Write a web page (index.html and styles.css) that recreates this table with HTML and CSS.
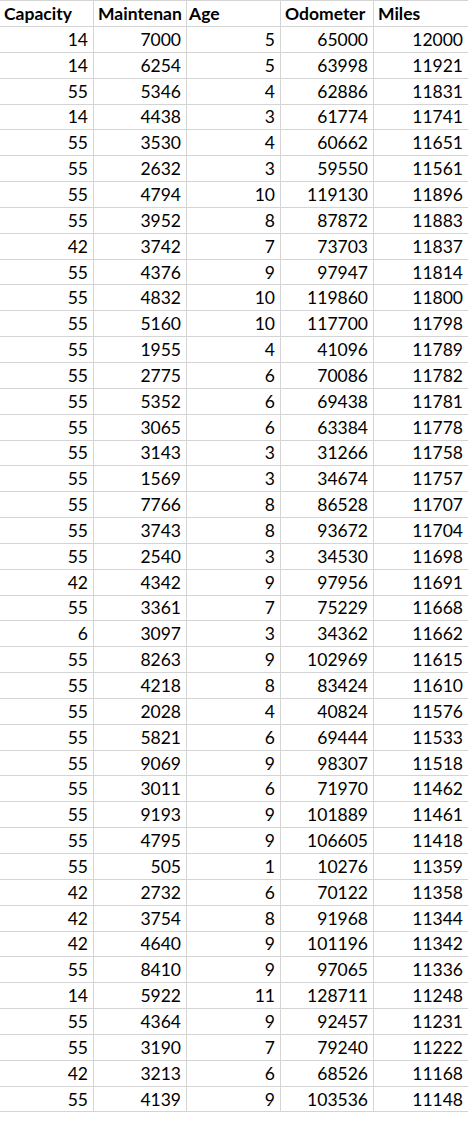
FILE: index.html
```html
<!DOCTYPE html>
<html>
<head>
<meta charset="utf-8">
<link rel="stylesheet" href="styles.css">
</head>
<body>
<div class="sheet">
  <div class="row head"><div class="c">Capacity</div><div class="c">Maintenan</div><div class="c age">Age</div><div class="c">Odometer</div><div class="c">Miles</div></div>
  <div class="row"><div class="c">14</div><div class="c">7000</div><div class="c">5</div><div class="c">65000</div><div class="c">12000</div></div>
  <div class="row"><div class="c">14</div><div class="c">6254</div><div class="c">5</div><div class="c">63998</div><div class="c">11921</div></div>
  <div class="row"><div class="c">55</div><div class="c">5346</div><div class="c">4</div><div class="c">62886</div><div class="c">11831</div></div>
  <div class="row"><div class="c">14</div><div class="c">4438</div><div class="c">3</div><div class="c">61774</div><div class="c">11741</div></div>
  <div class="row"><div class="c">55</div><div class="c">3530</div><div class="c">4</div><div class="c">60662</div><div class="c">11651</div></div>
  <div class="row"><div class="c">55</div><div class="c">2632</div><div class="c">3</div><div class="c">59550</div><div class="c">11561</div></div>
  <div class="row"><div class="c">55</div><div class="c">4794</div><div class="c">10</div><div class="c">119130</div><div class="c">11896</div></div>
  <div class="row"><div class="c">55</div><div class="c">3952</div><div class="c">8</div><div class="c">87872</div><div class="c">11883</div></div>
  <div class="row"><div class="c">42</div><div class="c">3742</div><div class="c">7</div><div class="c">73703</div><div class="c">11837</div></div>
  <div class="row"><div class="c">55</div><div class="c">4376</div><div class="c">9</div><div class="c">97947</div><div class="c">11814</div></div>
  <div class="row"><div class="c">55</div><div class="c">4832</div><div class="c">10</div><div class="c">119860</div><div class="c">11800</div></div>
  <div class="row"><div class="c">55</div><div class="c">5160</div><div class="c">10</div><div class="c">117700</div><div class="c">11798</div></div>
  <div class="row"><div class="c">55</div><div class="c">1955</div><div class="c">4</div><div class="c">41096</div><div class="c">11789</div></div>
  <div class="row"><div class="c">55</div><div class="c">2775</div><div class="c">6</div><div class="c">70086</div><div class="c">11782</div></div>
  <div class="row"><div class="c">55</div><div class="c">5352</div><div class="c">6</div><div class="c">69438</div><div class="c">11781</div></div>
  <div class="row"><div class="c">55</div><div class="c">3065</div><div class="c">6</div><div class="c">63384</div><div class="c">11778</div></div>
  <div class="row"><div class="c">55</div><div class="c">3143</div><div class="c">3</div><div class="c">31266</div><div class="c">11758</div></div>
  <div class="row"><div class="c">55</div><div class="c">1569</div><div class="c">3</div><div class="c">34674</div><div class="c">11757</div></div>
  <div class="row"><div class="c">55</div><div class="c">7766</div><div class="c">8</div><div class="c">86528</div><div class="c">11707</div></div>
  <div class="row"><div class="c">55</div><div class="c">3743</div><div class="c">8</div><div class="c">93672</div><div class="c">11704</div></div>
  <div class="row"><div class="c">55</div><div class="c">2540</div><div class="c">3</div><div class="c">34530</div><div class="c">11698</div></div>
  <div class="row"><div class="c">42</div><div class="c">4342</div><div class="c">9</div><div class="c">97956</div><div class="c">11691</div></div>
  <div class="row"><div class="c">55</div><div class="c">3361</div><div class="c">7</div><div class="c">75229</div><div class="c">11668</div></div>
  <div class="row"><div class="c">6</div><div class="c">3097</div><div class="c">3</div><div class="c">34362</div><div class="c">11662</div></div>
  <div class="row"><div class="c">55</div><div class="c">8263</div><div class="c">9</div><div class="c">102969</div><div class="c">11615</div></div>
  <div class="row"><div class="c">55</div><div class="c">4218</div><div class="c">8</div><div class="c">83424</div><div class="c">11610</div></div>
  <div class="row"><div class="c">55</div><div class="c">2028</div><div class="c">4</div><div class="c">40824</div><div class="c">11576</div></div>
  <div class="row"><div class="c">55</div><div class="c">5821</div><div class="c">6</div><div class="c">69444</div><div class="c">11533</div></div>
  <div class="row"><div class="c">55</div><div class="c">9069</div><div class="c">9</div><div class="c">98307</div><div class="c">11518</div></div>
  <div class="row"><div class="c">55</div><div class="c">3011</div><div class="c">6</div><div class="c">71970</div><div class="c">11462</div></div>
  <div class="row"><div class="c">55</div><div class="c">9193</div><div class="c">9</div><div class="c">101889</div><div class="c">11461</div></div>
  <div class="row"><div class="c">55</div><div class="c">4795</div><div class="c">9</div><div class="c">106605</div><div class="c">11418</div></div>
  <div class="row"><div class="c">55</div><div class="c">505</div><div class="c">1</div><div class="c">10276</div><div class="c">11359</div></div>
  <div class="row"><div class="c">42</div><div class="c">2732</div><div class="c">6</div><div class="c">70122</div><div class="c">11358</div></div>
  <div class="row"><div class="c">42</div><div class="c">3754</div><div class="c">8</div><div class="c">91968</div><div class="c">11344</div></div>
  <div class="row"><div class="c">42</div><div class="c">4640</div><div class="c">9</div><div class="c">101196</div><div class="c">11342</div></div>
  <div class="row"><div class="c">55</div><div class="c">8410</div><div class="c">9</div><div class="c">97065</div><div class="c">11336</div></div>
  <div class="row"><div class="c">14</div><div class="c">5922</div><div class="c">11</div><div class="c">128711</div><div class="c">11248</div></div>
  <div class="row"><div class="c">55</div><div class="c">4364</div><div class="c">9</div><div class="c">92457</div><div class="c">11231</div></div>
  <div class="row"><div class="c">55</div><div class="c">3190</div><div class="c">7</div><div class="c">79240</div><div class="c">11222</div></div>
  <div class="row"><div class="c">42</div><div class="c">3213</div><div class="c">6</div><div class="c">68526</div><div class="c">11168</div></div>
  <div class="row"><div class="c">55</div><div class="c">4139</div><div class="c">9</div><div class="c">103536</div><div class="c">11148</div></div>
</div>
</body>
</html>
```
FILE: styles.css
```css
html, body {
  margin: 0;
  padding: 0;
  background: #ffffff;
  overflow: hidden;
}
.sheet {
  display: grid;
  grid-template-columns: 94px 93px 94px 93px 95px;
  grid-template-rows: 27px;
  grid-auto-rows: 25.85px;
  font-family: Lato, "Liberation Sans", sans-serif;
  font-size: 17.5px;
  color: #000000;
}
.row {
  display: contents;
}
.c {
  box-sizing: border-box;
  border-right: 1px solid #d4d4d4;
  border-bottom: 1px solid #d4d4d4;
  display: flex;
  align-items: center;
  justify-content: flex-end;
  padding: 0 5px 0 4px;
  white-space: nowrap;
  overflow: hidden;
}
.head .c {
  justify-content: flex-start;
  font-weight: 700;
  border-top: 1px solid #d4d4d4;
}
.head .c:first-child {
  padding-left: 4px;
}
.head .age {
  padding-left: 2px;
}
```
